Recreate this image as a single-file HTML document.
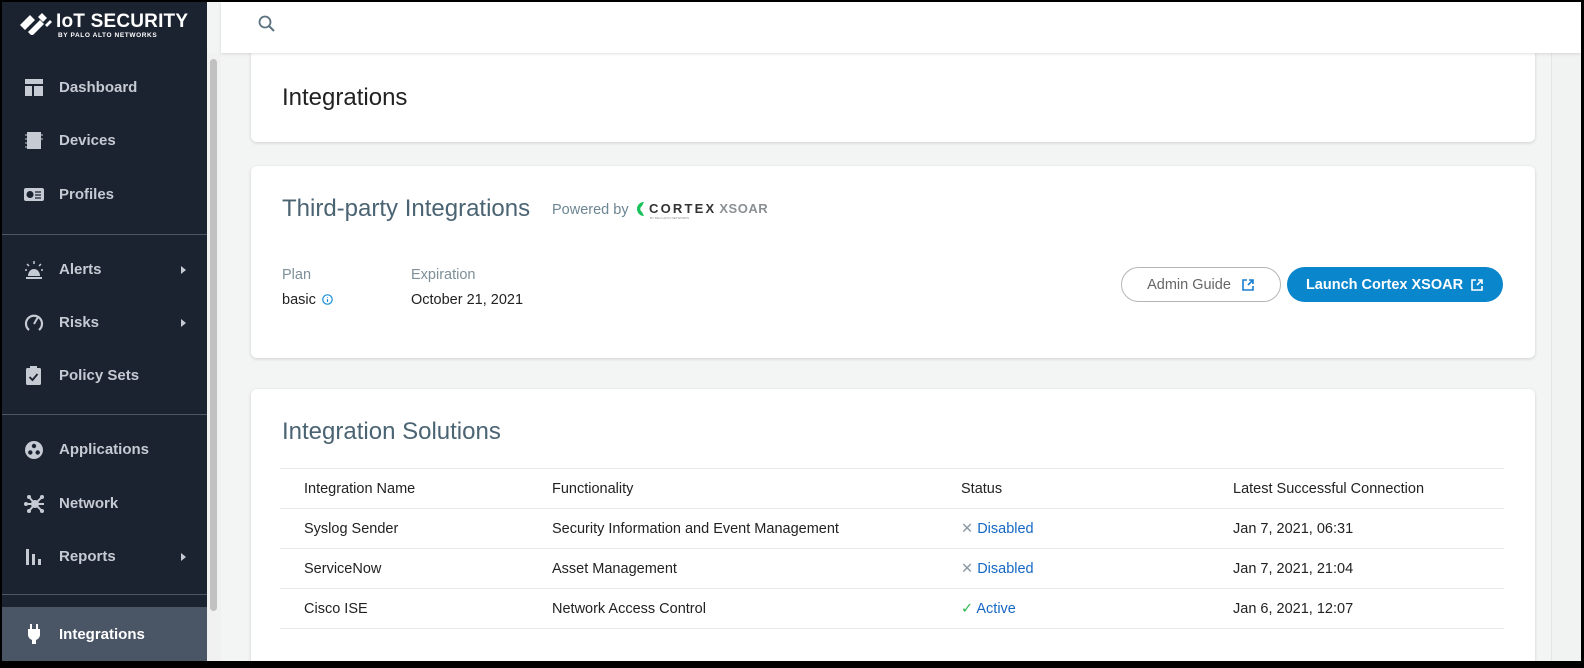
<!DOCTYPE html>
<html><head><meta charset="utf-8"><style>
*{box-sizing:border-box;margin:0;padding:0}
body{width:1584px;height:668px;background:#000;font-family:"Liberation Sans",sans-serif;position:relative;overflow:hidden}
#frame{position:absolute;left:2px;top:2px;width:1579px;height:659px;background:#f3f4f4;overflow:hidden}
#side{position:absolute;left:0;top:0;width:205px;height:659px;background:#1b2230}
#sbar{position:absolute;left:205px;top:51px;width:14px;height:608px;background:#f1f1f1}
#sbar div{position:absolute;left:3px;top:6px;width:7px;height:552px;background:#c1c1c1;border-radius:4px}
.logo{position:absolute;left:16px;top:6px;color:#fff}
.item{position:absolute;left:0;width:205px;height:53px;color:#c5cad3;font-size:15px;font-weight:bold;display:flex;align-items:center}
.item svg{position:absolute;left:22px}
.item span{position:absolute;left:57px}
.arr{position:absolute;left:179px;width:0;height:0;border-left:5px solid #c5cad3;border-top:4px solid transparent;border-bottom:4px solid transparent}
.div{position:absolute;left:0;width:205px;height:1px;background:#4d5666}
#head{position:absolute;left:219px;top:0;width:1360px;height:51px;background:#fff;box-shadow:0 1px 3px rgba(0,0,0,.12);z-index:2}
#rbar{position:absolute;left:1549px;top:51px;width:30px;height:608px;background:#f1f2f2;border-left:1px solid #e6e6e6}
.card{position:absolute;left:249px;width:1284px;background:#fff;border-radius:6px;box-shadow:0 1px 3px rgba(0,0,0,.15)}
.muted{color:#7d8f99;font-size:14.5px}
table{position:absolute;left:29px;top:79px;width:1224px;border-collapse:collapse;font-size:14.5px;color:#222}
td{height:40px;border-top:1px solid #e5e9ec;padding-left:24px;vertical-align:middle}
tr:last-child td{border-bottom:1px solid #e5e9ec}
.st{color:#1567c3}
</style></head><body><div id="frame">
<div id="side">
 <div class="logo">
  <svg width="34" height="22" viewBox="0 0 34 22" style="position:absolute;left:0;top:5px"><path d="M2 12 L12 2 L17 7 L7 17Z M10 19 L22 7 L26 11 L14 23Z M20 4 L24 0 L29 5 L25 9Z M27 12 L32 7 L34 9 L29 14Z" fill="#fff"/></svg>
  <div style="position:absolute;left:38px;top:3px;font-size:19px;font-weight:bold;white-space:nowrap;letter-spacing:.2px">IoT SECURITY</div>
  <div style="position:absolute;left:40px;top:24px;font-size:6.5px;font-weight:bold;white-space:nowrap;letter-spacing:.6px">BY PALO ALTO NETWORKS</div>
 </div>
 <div class="item" style="top:59px"><svg width="22" height="20" viewBox="0 0 22 20"><rect x="1" y="1" width="18" height="5" fill="#c5cad3"/><rect x="1" y="8" width="7" height="10" fill="#c5cad3"/><rect x="10" y="8" width="9" height="10" fill="#c5cad3"/></svg><span>Dashboard</span></div>
 <div class="item" style="top:112px"><svg width="22" height="20" viewBox="0 0 22 20"><rect x="3" y="1" width="14" height="17" fill="#c5cad3"/><path d="M1 4h2M1 8h2M1 12h2M1 16h2M17 4h2M17 8h2" stroke="#c5cad3"/></svg><span>Devices</span></div>
 <div class="item" style="top:166px"><svg width="22" height="20" viewBox="0 0 22 20"><rect x="0" y="3" width="20" height="13" rx="2" fill="#c5cad3"/><circle cx="6" cy="9.5" r="3.5" fill="#1b2230"/><path d="M11 7h6M11 10h6M11 13h6" stroke="#1b2230" stroke-width="1.2"/></svg><span>Profiles</span></div>
 <div class="div" style="top:232px"></div>
 <div class="item" style="top:241px"><svg width="22" height="22" viewBox="0 0 22 22"><path d="M4 17 A6 7 0 0 1 16 17Z" fill="#c5cad3"/><rect x="2" y="18" width="16" height="2" fill="#c5cad3"/><path d="M10 2v3M3 5l2 2M17 5l-2 2M1 11h2M17 11h2" stroke="#c5cad3" stroke-width="1.5"/></svg><span>Alerts</span><i class="arr"></i></div>
 <div class="item" style="top:294px"><svg width="22" height="22" viewBox="0 0 22 22"><path d="M5 18 A8 8 0 1 1 15 18" fill="none" stroke="#c5cad3" stroke-width="2.2"/><path d="M10 12 L14 5" stroke="#c5cad3" stroke-width="2"/></svg><span>Risks</span><i class="arr"></i></div>
 <div class="item" style="top:347px"><svg width="22" height="22" viewBox="0 0 22 22"><rect x="2" y="3" width="15" height="17" rx="1.5" fill="#c5cad3"/><rect x="6" y="1" width="7" height="4" fill="#c5cad3"/><path d="M5.5 12 l3 3 l5 -6" fill="none" stroke="#1b2230" stroke-width="1.8"/></svg><span>Policy Sets</span></div>
 <div class="div" style="top:412px"></div>
 <div class="item" style="top:421px"><svg width="22" height="22" viewBox="0 0 22 22"><circle cx="10" cy="11" r="9" fill="#c5cad3"/><circle cx="10" cy="7" r="2.2" fill="#1b2230"/><circle cx="6.3" cy="13.5" r="2.2" fill="#1b2230"/><circle cx="13.7" cy="13.5" r="2.2" fill="#1b2230"/></svg><span>Applications</span></div>
 <div class="item" style="top:475px"><svg width="24" height="24" viewBox="0 0 24 24"><path d="M11 12 L5 5 M11 12 L18 5 M11 12 L2 12 M11 12 L5 19 M11 12 L18 19 M11 12 L20 12" stroke="#c5cad3" stroke-width="2"/><circle cx="11" cy="12" r="4" fill="#c5cad3"/><circle cx="5" cy="5" r="2" fill="#c5cad3"/><circle cx="18" cy="5" r="2" fill="#c5cad3"/><circle cx="2" cy="12" r="2" fill="#c5cad3"/><circle cx="5" cy="19" r="2" fill="#c5cad3"/><circle cx="18" cy="19" r="2" fill="#c5cad3"/></svg><span>Network</span></div>
 <div class="item" style="top:528px"><svg width="22" height="22" viewBox="0 0 22 22"><rect x="2" y="3" width="3" height="16" fill="#c5cad3"/><rect x="8" y="8" width="3" height="11" fill="#c5cad3"/><rect x="14" y="13" width="3" height="6" fill="#c5cad3"/></svg><span>Reports</span><i class="arr"></i></div>
 <div class="div" style="top:592px"></div>
 <div class="item" style="top:605px;height:54px;background:#4a5566;color:#fff"><svg width="22" height="22" viewBox="0 0 22 22"><rect x="6" y="1" width="2" height="5" fill="#fff"/><rect x="12" y="1" width="2" height="5" fill="#fff"/><path d="M4 6h12v6a6 6 0 0 1-4 5v4h-4v-4a6 6 0 0 1-4-5z" fill="#fff"/></svg><span>Integrations</span></div>
</div>
<div id="sbar"><div></div></div>
<div id="head"><svg width="20" height="20" viewBox="0 0 20 20" style="position:absolute;left:36px;top:12px"><circle cx="8" cy="8" r="5.5" fill="none" stroke="#5b7280" stroke-width="1.8"/><path d="M12 12 L17 17" stroke="#5b7280" stroke-width="2"/></svg></div>
<div id="rbar"></div>
<div class="card" style="top:35px;height:105px"><div style="position:absolute;left:31px;top:47px;font-size:24px;color:#222">Integrations</div></div>
<div class="card" style="top:164px;height:192px">
 <div style="position:absolute;left:31px;top:29px;font-size:24px;color:#4b6473">Third-party Integrations</div>
 <div style="position:absolute;left:301px;top:36px;font-size:14.5px;color:#6b8593">Powered by</div>
 <svg width="12" height="16" viewBox="0 0 12 16" style="position:absolute;left:384px;top:35px"><path d="M9 1 A7 7 0 0 0 9 15 L7 11 A3.5 3.5 0 0 1 7 5Z" fill="#17c25a"/></svg>
 <div style="position:absolute;left:398px;top:35px;font-size:13px;font-weight:bold;color:#333;letter-spacing:2.2px">CORTEX<span style="color:#8a8f94;letter-spacing:.5px;margin-left:3px">XSOAR</span></div>
 <div style="position:absolute;left:399px;top:50px;font-size:3px;color:#888">BY PALO ALTO NETWORKS</div>
 <div class="muted" style="position:absolute;left:31px;top:101px">Plan</div>
 <div style="position:absolute;left:31px;top:126px;font-size:14.5px;color:#222">basic <svg width="11" height="11" viewBox="0 0 11 11" style="vertical-align:-1px;margin-left:2px"><circle cx="5.5" cy="5.5" r="4.7" fill="none" stroke="#1a8fd6" stroke-width="1.2"/><path d="M5.5 5v3M5.5 3v.8" stroke="#1a8fd6" stroke-width="1.2"/></svg></div>
 <div class="muted" style="position:absolute;left:160px;top:101px">Expiration</div>
 <div style="position:absolute;left:160px;top:126px;font-size:14.5px;color:#222">October 21, 2021</div>
 <div style="position:absolute;left:870px;top:101px;width:160px;height:35px;border:1px solid #b5b5b5;border-radius:18px;font-size:14.5px;color:#666;display:flex;align-items:center;justify-content:center">Admin Guide <svg width="14" height="14" viewBox="0 0 14 14" style="margin-left:10px"><path d="M6 2H2v10h10V8" fill="none" stroke="#1a7fd0" stroke-width="1.6"/><path d="M7 7 L12 2 M8 2h4v4" fill="none" stroke="#1a7fd0" stroke-width="1.6"/></svg></div>
 <div style="position:absolute;left:1036px;top:101px;width:216px;height:35px;background:#0a86cd;border-radius:18px;font-size:14.5px;font-weight:bold;color:#fff;display:flex;align-items:center;justify-content:center">Launch Cortex XSOAR <svg width="14" height="14" viewBox="0 0 14 14" style="margin-left:7px"><path d="M6 2H2v10h10V8" fill="none" stroke="#fff" stroke-width="1.6"/><path d="M7 7 L12 2 M8 2h4v4" fill="none" stroke="#fff" stroke-width="1.6"/></svg></div>
</div>
<div class="card" style="top:387px;height:290px">
 <div style="position:absolute;left:31px;top:29px;font-size:24px;color:#4b6473">Integration Solutions</div>
 <table>
  <tr><td style="width:248px">Integration Name</td><td style="width:409px">Functionality</td><td style="width:272px">Status</td><td>Latest Successful Connection</td></tr>
  <tr><td>Syslog Sender</td><td>Security Information and Event Management</td><td><span style="color:#8a98a3">✕</span> <span class="st">Disabled</span></td><td>Jan 7, 2021, 06:31</td></tr>
  <tr><td>ServiceNow</td><td>Asset Management</td><td><span style="color:#8a98a3">✕</span> <span class="st">Disabled</span></td><td>Jan 7, 2021, 21:04</td></tr>
  <tr><td>Cisco ISE</td><td>Network Access Control</td><td><span style="color:#2eb84f">✓</span> <span class="st">Active</span></td><td>Jan 6, 2021, 12:07</td></tr>
 </table>
</div>
</div></body></html>
